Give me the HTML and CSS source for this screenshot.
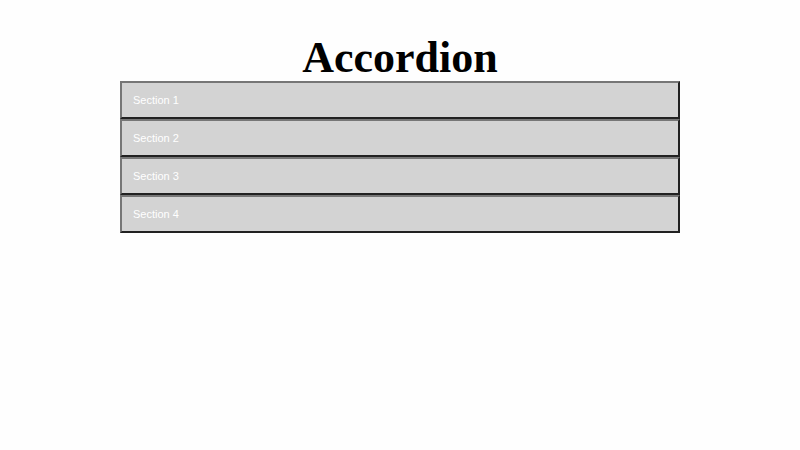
FILE: index.html
```html
<!DOCTYPE html>
<html>
<head>
<meta charset="utf-8">
<link rel="stylesheet" href="styles.css">
</head>
<body>
<h1 class="title">Accordion</h1>
<div class="accordion">
  <button class="section">Section 1</button>
  <button class="section">Section 2</button>
  <button class="section">Section 3</button>
  <button class="section">Section 4</button>
</div>
</body>
</html>
```
FILE: styles.css
```css
html, body {
  margin: 0;
  padding: 0;
  background: #fefefe;
}
.title {
  margin: 34px 0 0;
  font-family: "Liberation Serif", serif;
  font-weight: bold;
  font-size: 44px;
  line-height: 47px;
  text-align: center;
  color: #000;
}
.accordion {
  width: 560px;
  margin: 0 auto;
  display: flex;
  flex-direction: column;
}
.section {
  display: block;
  box-sizing: border-box;
  width: 100%;
  height: 38px;
  flex: 0 0 38px;
  margin: 0;
  padding: 0 11px;
  text-align: left;
  background-color: #d3d3d3;
  color: #fff;
  font-family: "Liberation Sans", Arial, sans-serif;
  font-size: 11px;
  border: 2px outset #767676;
  cursor: pointer;
}
```
